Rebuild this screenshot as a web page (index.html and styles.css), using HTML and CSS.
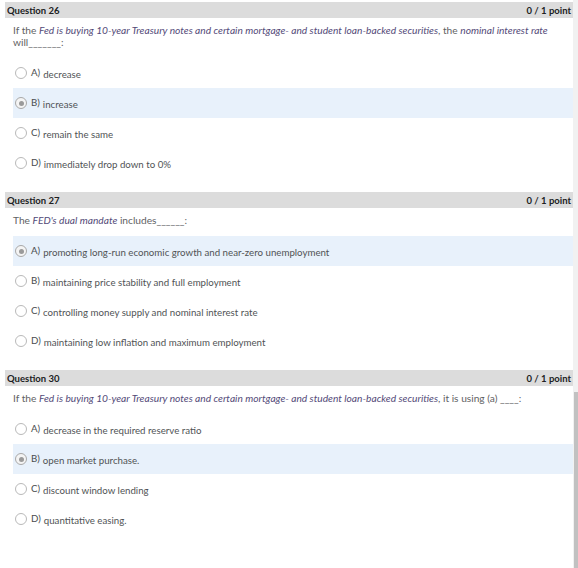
FILE: index.html
```html
<!DOCTYPE html>
<html>
<head>
<meta charset="utf-8">
<link rel="stylesheet" href="styles.css">
</head>
<body>
<div class="page">
  <section class="question">
    <div class="q-head"><span>Question 26</span><span>0 / 1 point</span></div>
    <div class="q-text">If the <em>Fed is buying 10-year Treasury notes and certain mortgage- and student loan-backed securities</em>, the <em>nominal interest rate</em><br>will_______:</div>
    <div class="options">
      <div class="opt"><span class="radio"></span><span class="lbl">A)</span><span class="txt">decrease</span></div>
      <div class="opt sel"><span class="radio on"></span><span class="lbl">B)</span><span class="txt">increase</span></div>
      <div class="opt"><span class="radio"></span><span class="lbl">C)</span><span class="txt">remain the same</span></div>
      <div class="opt"><span class="radio"></span><span class="lbl">D)</span><span class="txt">immediately drop down to 0%</span></div>
    </div>
  </section>
  <section class="question">
    <div class="q-head"><span>Question 27</span><span>0 / 1 point</span></div>
    <div class="q-text">The <em>FED's dual mandate</em> includes______:</div>
    <div class="options">
      <div class="opt sel"><span class="radio on"></span><span class="lbl">A)</span><span class="txt">promoting long-run economic growth and near-zero unemployment</span></div>
      <div class="opt"><span class="radio"></span><span class="lbl">B)</span><span class="txt">maintaining price stability and full employment</span></div>
      <div class="opt"><span class="radio"></span><span class="lbl">C)</span><span class="txt">controlling money supply and nominal interest rate</span></div>
      <div class="opt"><span class="radio"></span><span class="lbl">D)</span><span class="txt">maintaining low inflation and maximum employment</span></div>
    </div>
  </section>
  <section class="question">
    <div class="q-head"><span>Question 30</span><span>0 / 1 point</span></div>
    <div class="q-text">If the <em>Fed is buying 10-year Treasury notes and certain mortgage- and student loan-backed securities</em>, it is using (a) ____:</div>
    <div class="options">
      <div class="opt"><span class="radio"></span><span class="lbl">A)</span><span class="txt">decrease in the required reserve ratio</span></div>
      <div class="opt sel"><span class="radio on"></span><span class="lbl">B)</span><span class="txt">open market purchase.</span></div>
      <div class="opt"><span class="radio"></span><span class="lbl">C)</span><span class="txt">discount window lending</span></div>
      <div class="opt"><span class="radio"></span><span class="lbl">D)</span><span class="txt">quantitative easing.</span></div>
    </div>
  </section>
</div>
<div class="scrollbar"><div class="thumb"></div></div>
</body>
</html>
```
FILE: styles.css
```css
html, body {
  margin: 0;
  padding: 0;
  background: #fff;
}
body {
  font-family: Lato, "Open Sans", sans-serif;
  color: #494c4e;
}
.page {
  padding: 2px 5px 0 5px;
  width: 568px;
}
.question {
  margin-bottom: 14px;
}
.q-head {
  height: 16px;
  background: #dcdcdc;
  display: flex;
  justify-content: space-between;
  align-items: center;
  padding: 0 2px;
  font-weight: 700;
  font-size: 9.5px;
  color: #202122;
}
.q-text {
  margin-top: 6px;
  padding-left: 8px;
  font-size: 10.2px;
  line-height: 12px;
  color: #5f6264;
}
.q-text em {
  font-style: italic;
  color: #534a78;
}
.options {
  margin-top: 10px;
  margin-left: 8px;
}
.opt {
  height: 30px;
  display: flex;
  align-items: center;
  padding-left: 2px;
  font-size: 9.7px;
}
.opt.sel {
  background: #e8f1fb;
}
.radio {
  width: 10px;
  height: 10px;
  border: 1px solid #b9b9b9;
  border-radius: 50%;
  background: #fff;
  position: relative;
  flex: none;
}
.radio.on {
  border-color: #a8a8a8;
  background: #f4f4f4;
}
.radio.on::after {
  content: "";
  position: absolute;
  left: 2.5px;
  top: 2.5px;
  width: 5px;
  height: 5px;
  border-radius: 50%;
  background: #9a9a9a;
}
.lbl {
  margin-left: 4px;
  position: relative;
  top: -1px;
  color: #494c4e;
}
.txt {
  margin-left: 3px;
  position: relative;
  top: 1px;
  color: #505355;
}
.scrollbar {
  position: fixed;
  top: 0;
  right: 0;
  width: 5px;
  height: 100%;
  background: #f1f1f1;
}
.thumb {
  position: absolute;
  top: 392px;
  right: 0;
  width: 4px;
  bottom: 0;
  background: #c1c1c1;
}
```
